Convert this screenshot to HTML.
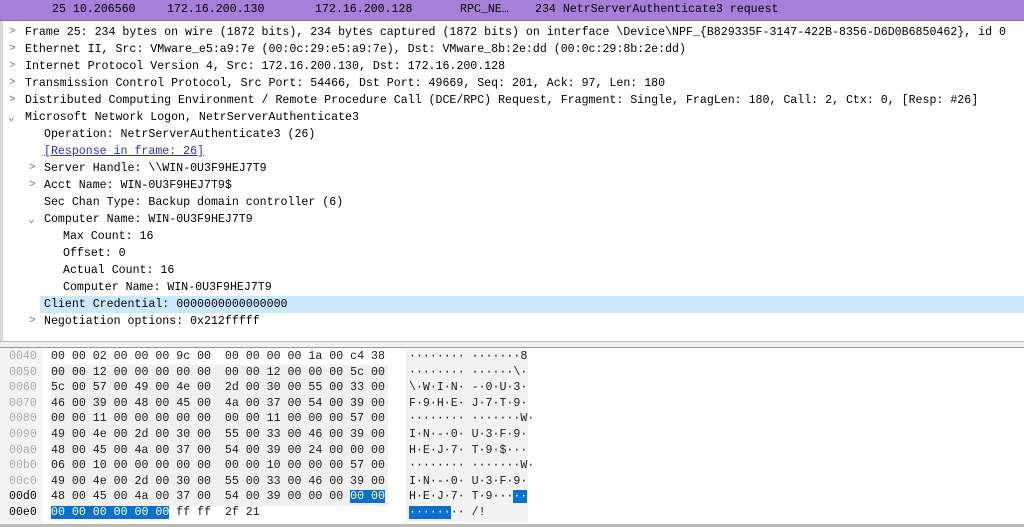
<!DOCTYPE html>
<html><head><style>
body{margin:0;width:1024px;height:527px;overflow:hidden;background:#fff;font-family:"Liberation Mono",monospace;font-size:11.6px;color:#000;position:relative}
.l{position:absolute;white-space:pre;line-height:17px;height:17px}
.a{position:absolute;color:#777;font-size:11px}
#bar{position:absolute;left:0;top:0;width:1024px;height:20px;background:#a87fd8;border-bottom:1px solid #8a6bb8}
#bar .l{top:1px}
.sel{position:absolute;left:40px;width:984px;top:296px;height:17px;background:#cce8ff}
.hx{color:#1a1a1a}
.off{color:#aaa}
.hl{background:#0a6fd0;color:#fff}
</style></head><body>
<div id="bar">
<div class="l" style="left:52px">25 10.206560</div>
<div class="l" style="left:167px">172.16.200.130</div>
<div class="l" style="left:315px">172.16.200.128</div>
<div class="l" style="left:460px">RPC_NE…</div>
<div class="l" style="left:535px">234 NetrServerAuthenticate3 request</div>
</div>
<div style="position:absolute;left:0;top:21px;width:3px;height:320px;background:#d8d8d8"></div>
<div class="sel"></div>
<div class="a" style="left:9px;top:26px">&gt;</div><div class="l" style="left:25px;top:24px">Frame 25: 234 bytes on wire (1872 bits), 234 bytes captured (1872 bits) on interface \Device\NPF_{B829335F-3147-422B-8356-D6D0B6850462}, id 0</div>
<div class="a" style="left:9px;top:43px">&gt;</div><div class="l" style="left:25px;top:41px">Ethernet II, Src: VMware_e5:a9:7e (00:0c:29:e5:a9:7e), Dst: VMware_8b:2e:dd (00:0c:29:8b:2e:dd)</div>
<div class="a" style="left:9px;top:60px">&gt;</div><div class="l" style="left:25px;top:58px">Internet Protocol Version 4, Src: 172.16.200.130, Dst: 172.16.200.128</div>
<div class="a" style="left:9px;top:77px">&gt;</div><div class="l" style="left:25px;top:75px">Transmission Control Protocol, Src Port: 54466, Dst Port: 49669, Seq: 201, Ack: 97, Len: 180</div>
<div class="a" style="left:9px;top:94px">&gt;</div><div class="l" style="left:25px;top:92px">Distributed Computing Environment / Remote Procedure Call (DCE/RPC) Request, Fragment: Single, FragLen: 180, Call: 2, Ctx: 0, [Resp: #26]</div>
<div class="a" style="left:8px;top:110px">⌄</div><div class="l" style="left:25px;top:109px">Microsoft Network Logon, NetrServerAuthenticate3</div>
<div class="l" style="left:44px;top:126px">Operation: NetrServerAuthenticate3 (26)</div>
<div class="l" style="left:44px;top:143px;color:#2a2ae0;text-decoration:underline">[Response in frame: 26]</div>
<div class="a" style="left:29px;top:162px">&gt;</div><div class="l" style="left:44px;top:160px">Server Handle: \\WIN-0U3F9HEJ7T9</div>
<div class="a" style="left:29px;top:179px">&gt;</div><div class="l" style="left:44px;top:177px">Acct Name: WIN-0U3F9HEJ7T9$</div>
<div class="l" style="left:44px;top:194px">Sec Chan Type: Backup domain controller (6)</div>
<div class="a" style="left:28px;top:212px">⌄</div><div class="l" style="left:44px;top:211px">Computer Name: WIN-0U3F9HEJ7T9</div>
<div class="l" style="left:63px;top:228px">Max Count: 16</div>
<div class="l" style="left:63px;top:245px">Offset: 0</div>
<div class="l" style="left:63px;top:262px">Actual Count: 16</div>
<div class="l" style="left:63px;top:279px">Computer Name: WIN-0U3F9HEJ7T9</div>
<div class="l" style="left:44px;top:296px">Client Credential: 0000000000000000</div>
<div class="a" style="left:29px;top:315px">&gt;</div><div class="l" style="left:44px;top:313px">Negotiation options: 0x212fffff</div>
<div style="position:absolute;left:0;top:341px;width:1024px;height:5px;background:#f0f0f0;border-top:1px solid #bbb;border-bottom:1px solid #999"></div>
<div style="position:absolute;left:0;top:348px;width:43px;height:176px;background:#f4f4f4"></div>
<div style="position:absolute;left:51px;top:365px;width:337px;height:141px;background:#f0f0f0"></div>
<div style="position:absolute;left:406px;top:349px;width:122px;height:173px;background:#f2f2f2"></div>
<div style="position:absolute;left:0;top:524px;width:1024px;height:3px;background:#bbb"></div>
<div class="l" style="left:9px;top:349px;line-height:15.6px"><span class="off">0040</span>
<span class="off">0050</span>
<span class="off">0060</span>
<span class="off">0070</span>
<span class="off">0080</span>
<span class="off">0090</span>
<span class="off">00a0</span>
<span class="off">00b0</span>
<span class="off">00c0</span>
<span>00d0</span>
<span>00e0</span></div>
<div class="l hx" style="left:51px;top:349px;line-height:15.6px">00 00 02 00 00 00 9c 00  00 00 00 00 1a 00 c4 38
00 00 12 00 00 00 00 00  00 00 12 00 00 00 5c 00
5c 00 57 00 49 00 4e 00  2d 00 30 00 55 00 33 00
46 00 39 00 48 00 45 00  4a 00 37 00 54 00 39 00
00 00 11 00 00 00 00 00  00 00 11 00 00 00 57 00
49 00 4e 00 2d 00 30 00  55 00 33 00 46 00 39 00
48 00 45 00 4a 00 37 00  54 00 39 00 24 00 00 00
06 00 10 00 00 00 00 00  00 00 10 00 00 00 57 00
49 00 4e 00 2d 00 30 00  55 00 33 00 46 00 39 00
48 00 45 00 4a 00 37 00  54 00 39 00 00 00 <span class="hl">00 00</span>
<span class="hl">00 00 00 00 00 00</span> ff ff  2f 21</div>
<div class="l hx" style="left:409px;top:349px;line-height:15.6px">········ ·······8
········ ······\·
\·W·I·N· -·0·U·3·
F·9·H·E· J·7·T·9·
········ ·······W·
I·N·-·0· U·3·F·9·
H·E·J·7· T·9·$···
········ ·······W·
I·N·-·0· U·3·F·9·
H·E·J·7· T·9···<span class="hl">··</span>
<span class="hl">······</span>·· /!</div>
</body></html>
